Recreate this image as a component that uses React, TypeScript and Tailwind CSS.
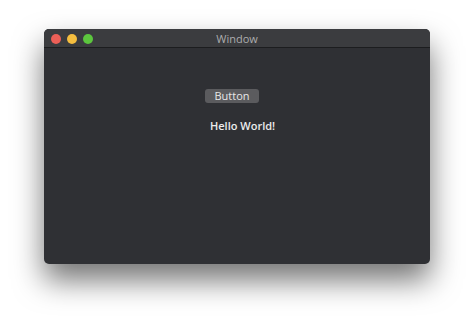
const App = () => {
    return (
        <div className="w-[474px] h-[323px] bg-white pl-[44px] pt-[29px] overflow-hidden" style={{ fontFamily: '"Open Sans", "Liberation Sans", sans-serif' }}>
            {/* window */}
            <div className="w-[386px] h-[235px] rounded-[5px] bg-[#2f3034] overflow-hidden shadow-[0_16px_30px_rgba(0,0,0,0.55)] flex flex-col">
                {/* title bar */}
                <div className="relative h-[19px] bg-[#3b3c3f] border-b border-[#1c1d1f] flex items-center">
                    <div className="flex items-center gap-[6px] pl-[7px] pt-[1px]">
                        <span className="w-[10px] h-[10px] rounded-full bg-[#ec5f57]" />
                        <span className="w-[10px] h-[10px] rounded-full bg-[#f5be3f]" />
                        <span className="w-[10px] h-[10px] rounded-full bg-[#5cc63e]" />
                    </div>
                    <div className="absolute inset-0 pt-[2px] flex items-center justify-center text-[11px] text-[#acacae]">
                        Window
                    </div>
                </div>
                {/* content */}
                <div className="flex flex-col items-start">
                    <button className="ml-[161px] mt-[41px] w-[54px] h-[14px] rounded-[3px] bg-[#5b5b5e] text-[#e8e8e8] text-[11px] leading-[14px] flex items-center justify-center">
                        Button
                    </button>
                    <div className="ml-[166px] mt-[16px] text-[11px] font-semibold text-[#ececec] leading-[14px]">
                        Hello World!
                    </div>
                </div>
            </div>
        </div>
    );
};

export default App;
